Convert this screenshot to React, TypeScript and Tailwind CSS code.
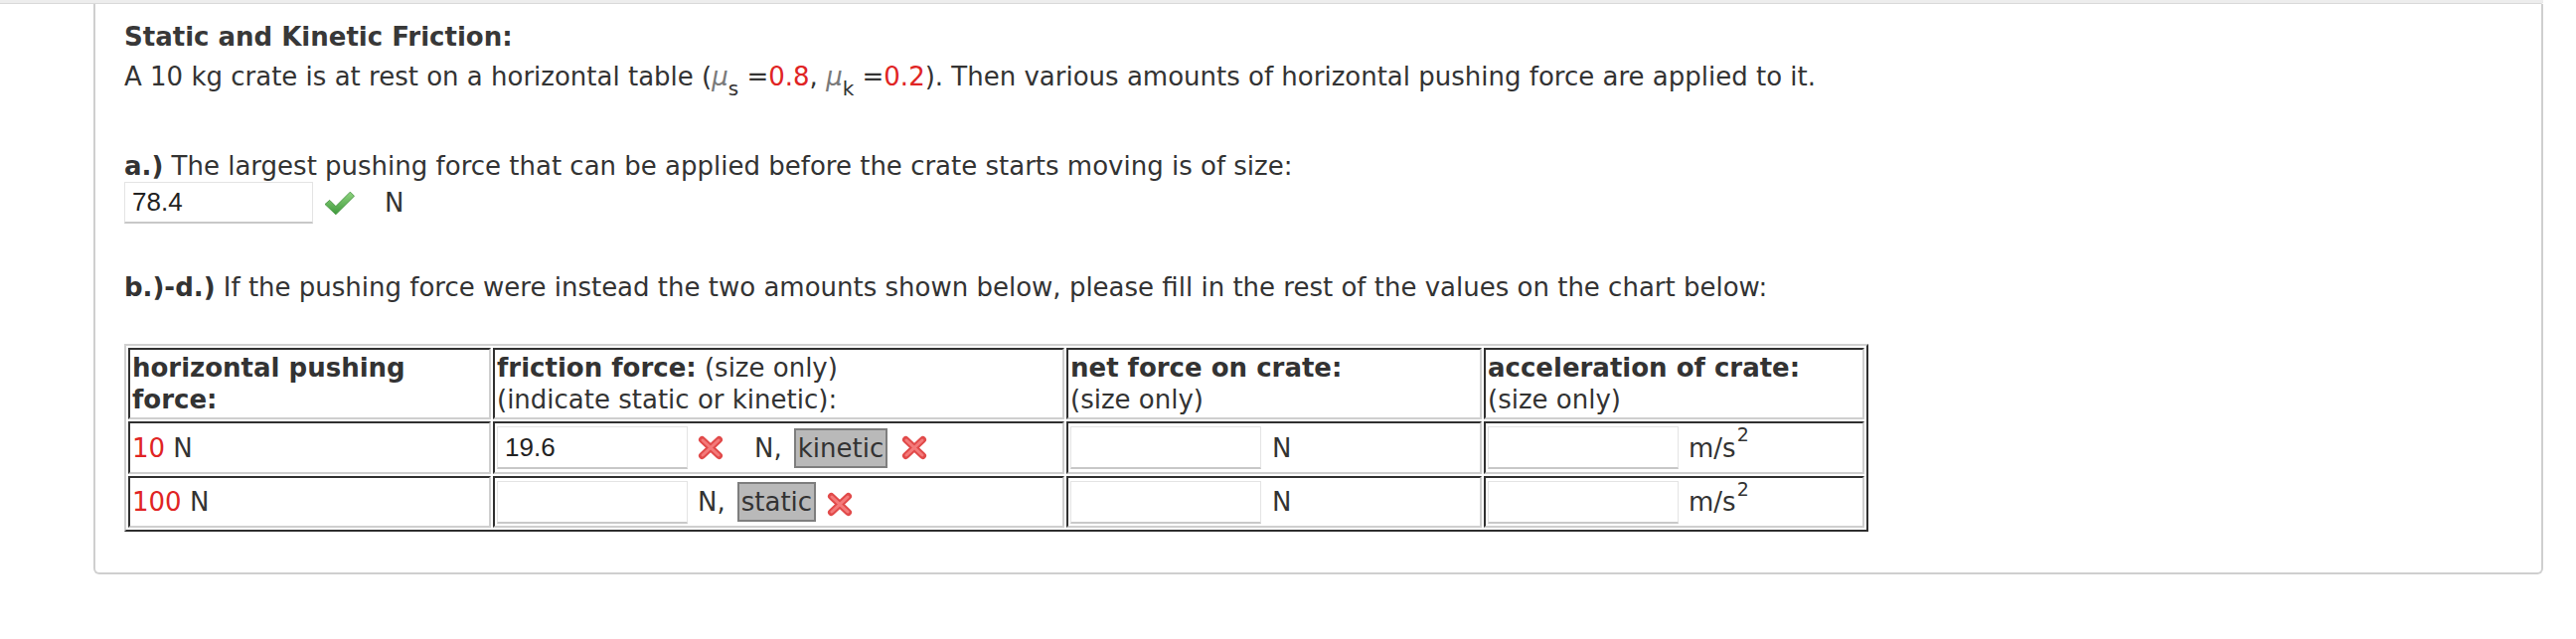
import React from "react";

const verdana = "font-['DejaVu_Sans',Verdana,sans-serif]";
const cell =
  "border-2 border-t-[#303030] border-l-[#303030] border-r-[#cfcfcf] border-b-[#cfcfcf] p-[2px] align-top";
const inputCls =
  "h-[43px] w-[192px] shrink-0 border border-[#e4e4e4] border-b-2 border-b-[#c8c8c8] bg-white pl-[7px] font-['Liberation_Sans',Arial,sans-serif] text-[26px] text-[#222] outline-none";

function Check() {
  return (
    <svg width="31" height="25" viewBox="0 0 30 24" className="shrink-0">
      <defs>
        <linearGradient id="ck" x1="0" y1="0" x2="0" y2="1">
          <stop offset="0" stopColor="#8fd37f" />
          <stop offset="1" stopColor="#3f9a3c" />
        </linearGradient>
      </defs>
      <path d="M1 13 L5.5 9 L11.5 15 L25.5 1 L29.5 5 L11.5 23 Z" fill="url(#ck)" stroke="#3f8f3a" strokeWidth="0.8" strokeLinejoin="round" />
    </svg>
  );
}

function Cross() {
  return (
    <svg width="26" height="25" viewBox="0 0 26 25" className="shrink-0">
      <g strokeLinecap="round">
        <line x1="4.5" y1="4.5" x2="21.5" y2="20.5" stroke="#e14a4a" strokeWidth="7" />
        <line x1="21.5" y1="4.5" x2="4.5" y2="20.5" stroke="#e14a4a" strokeWidth="7" />
        <line x1="5" y1="5" x2="21" y2="20" stroke="#f47a7a" strokeWidth="3" />
        <line x1="21" y1="5" x2="5" y2="20" stroke="#f47a7a" strokeWidth="3" />
      </g>
    </svg>
  );
}

function Choice({ label }: { label: string }) {
  return (
    <span className="flex h-[40px] shrink-0 items-center border-2 border-[#7e7e7e] bg-[#b9b9b9] px-[2px] leading-none">
      {label}
    </span>
  );
}

function Red({ children }: { children: React.ReactNode }) {
  return <span className="text-[#e02424]">{children}</span>;
}

function Unit() {
  return (
    <span className="ml-[10px] leading-none">
      m/s<sup className="ml-[1px] align-[6px] text-[19px] leading-none">2</sup>
    </span>
  );
}

export default function App() {
  return (
    <div className={`h-[643px] w-[2592px] bg-white text-[26px] text-[#333] ${verdana}`}>
      <div className="h-[4px] w-[2559px] rounded-br-[3px] border-b border-[#d9d9d9] bg-[#ededed]" />
      <div className="ml-[94px] w-[2465px] rounded-b-[6px] border-x-2 border-b-2 border-[#cfcfcf] pb-[41px] pl-[29px] pt-[17px]">
        <div className="font-bold leading-[32px] text-[#383838]">Static and Kinetic Friction:</div>
        <div className="mt-[8px] whitespace-nowrap leading-[32px]">
          A 10 kg crate is at rest on a horizontal table (
          <span className="italic text-[#7a7a7a]">μ</span>
          <sub className="align-[-5px] text-[20px] leading-none">s</sub> =<Red>0.8</Red>,{" "}
          <span className="italic text-[#7a7a7a]">μ</span>
          <sub className="align-[-5px] text-[20px] leading-none">k</sub> =<Red>0.2</Red>). Then various amounts of
          horizontal pushing force are applied to it.
        </div>

        <div className="mt-[57px] leading-[32px]">
          <b>a.)</b> The largest pushing force that can be applied before the crate starts moving is of size:
        </div>
        <div className="flex h-[42px] items-center">
          <input readOnly value="78.4" className={`${inputCls} !h-[42px] !w-[190px] pl-[6px]`} />
          <span className="ml-[11px]">
            <Check />
          </span>
          <span className="ml-[30px]">N</span>
        </div>

        <div className="mt-[48px] leading-[32px]">
          <b>b.)-d.)</b> If the pushing force were instead the two amounts shown below, please fill in the rest of
          the values on the chart below:
        </div>

        <table className="mt-[41px] w-[1755px] table-fixed border-separate border-spacing-[2px] border-2 border-t-[#d0d0d0] border-l-[#d0d0d0] border-r-[#2e2e2e] border-b-[#2e2e2e] leading-[32px]">
          <tbody>
            <tr>
              <td className={`${cell} w-[365px]`}>
                <b>horizontal pushing force:</b>
              </td>
              <td className={`${cell} w-[575px]`}>
                <b>friction force:</b> (size only)
                <br />
                (indicate static or kinetic):
              </td>
              <td className={`${cell} w-[418px]`}>
                <b>net force on crate:</b>
                <br />
                (size only)
              </td>
              <td className={`${cell} w-[383px]`}>
                <b>acceleration of crate:</b>
                <br />
                (size only)
              </td>
            </tr>
            <tr>
              <td className={cell}>
                <div className="flex h-[45px] items-center">
                  <Red>10</Red>&nbsp;N
                </div>
              </td>
              <td className={cell}>
                <div className="flex h-[45px] items-center">
                  <input readOnly value="19.6" className={inputCls} />
                  <span className="ml-[10px]">
                    <Cross />
                  </span>
                  <span className="ml-[31px]">N,</span>
                  <span className="ml-[12px]">
                    <Choice label="kinetic" />
                  </span>
                  <span className="ml-[14px]">
                    <Cross />
                  </span>
                </div>
              </td>
              <td className={cell}>
                <div className="flex h-[45px] items-center">
                  <input readOnly value="" className={inputCls} />
                  <span className="ml-[11px]">N</span>
                </div>
              </td>
              <td className={cell}>
                <div className="flex h-[45px] items-center">
                  <input readOnly value="" className={inputCls} />
                  <Unit />
                </div>
              </td>
            </tr>
            <tr>
              <td className={cell}>
                <div className="flex h-[44px] items-center">
                  <Red>100</Red>&nbsp;N
                </div>
              </td>
              <td className={cell}>
                <div className="flex h-[44px] items-center">
                  <input readOnly value="" className={inputCls} />
                  <span className="ml-[10px]">N,</span>
                  <span className="ml-[12px]">
                    <Choice label="static" />
                  </span>
                  <span className="ml-[11px] pt-[4px]">
                    <Cross />
                  </span>
                </div>
              </td>
              <td className={cell}>
                <div className="flex h-[44px] items-center">
                  <input readOnly value="" className={inputCls} />
                  <span className="ml-[11px]">N</span>
                </div>
              </td>
              <td className={cell}>
                <div className="flex h-[44px] items-center">
                  <input readOnly value="" className={inputCls} />
                  <Unit />
                </div>
              </td>
            </tr>
          </tbody>
        </table>
      </div>
    </div>
  );
}
